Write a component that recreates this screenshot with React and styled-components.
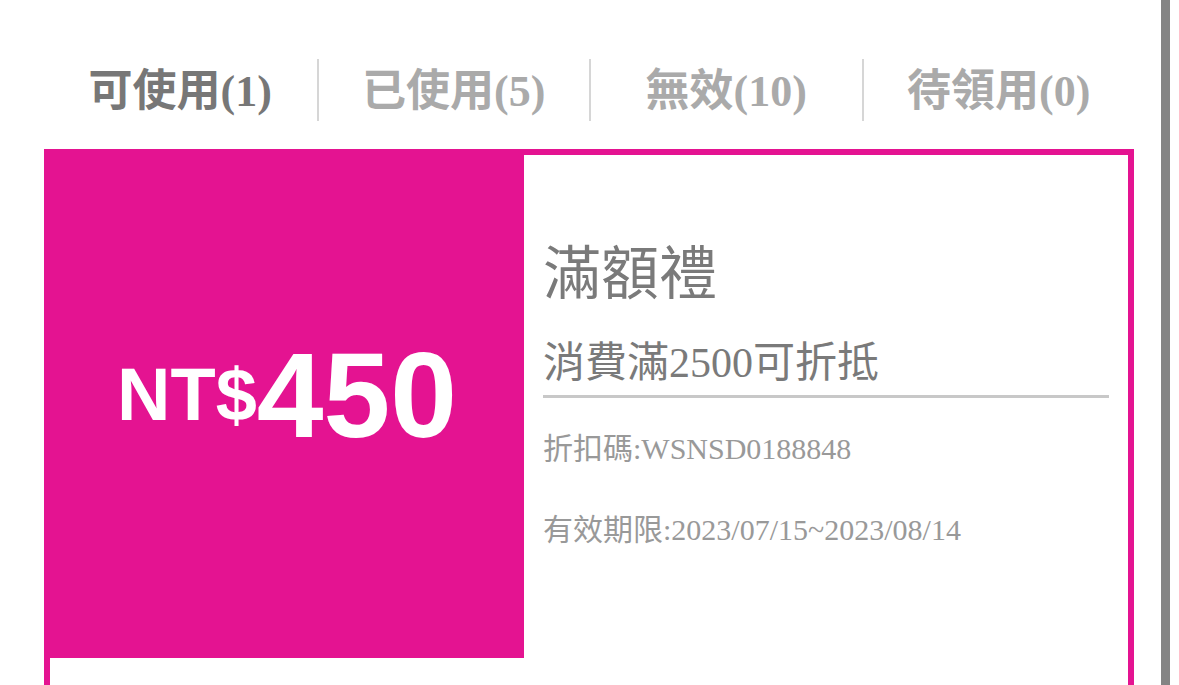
import React from 'react';
import styled, { createGlobalStyle } from 'styled-components';

const GlobalStyle = createGlobalStyle`
  html, body {
    margin: 0;
    padding: 0;
    height: 100%;
    overflow: hidden;
    background: #ffffff;
  }
  body {
    font-family: "Liberation Serif", "Noto Sans CJK TC", serif;
  }
`;

const MAGENTA = '#e41391';

// 頁面外框：左側內容 + 右側灰色捲軸條
const Page = styled.div`
  display: flex;
  height: 685px;
`;

const Main = styled.main`
  flex: 0 0 1161px;
  box-sizing: border-box;
  padding: 59px 27px 0 44px;
`;

const Rail = styled.div`
  flex: 0 0 9px;
  background: #848484;
`;

// 優惠券狀態分頁
const Tabs = styled.nav`
  display: grid;
  grid-template-columns: repeat(4, 1fr);
  height: 62px;
`;

const Tab = styled.div`
  display: flex;
  align-items: center;
  justify-content: center;
  padding-top: 3px;
  font-size: 44px;
  font-weight: 700;
  line-height: 1;
  color: ${(p) => (p.$active ? '#777777' : '#aaaaaa')};
  white-space: nowrap;

  & + & {
    border-left: 2px solid #d6d6d6;
  }
`;

// 優惠券卡片
const Card = styled.section`
  margin-top: 28px;
  border: 6px solid ${MAGENTA};
`;

const CardRow = styled.div`
  display: flex;
  height: 503px;
`;

const PricePanel = styled.div`
  flex: 0 0 474px;
  display: flex;
  align-items: center;
  justify-content: center;
  padding-bottom: 24px;
  box-sizing: border-box;
  background: ${MAGENTA};
  color: #ffffff;
  font-family: "Liberation Sans", Arial, sans-serif;
  font-weight: 700;
  line-height: 1;
`;

const Currency = styled.span`
  font-size: 74px;
`;

const Amount = styled.span`
  font-size: 120px;
`;

const Info = styled.div`
  flex: 1;
  display: flex;
  flex-direction: column;
  padding: 91px 19px 0;
  line-height: 1;
`;

const Title = styled.h2`
  margin: 0;
  font-size: 58px;
  font-weight: 400;
  color: #7a7a7a;
`;

const Subtitle = styled.p`
  margin: 38px 0 0;
  padding-bottom: 11px;
  border-bottom: 3px solid #c8c8c8;
  font-size: 42px;
  color: #7a7a7a;
`;

const Detail = styled.p`
  margin: ${(p) => p.$gap}px 0 0;
  font-size: 30px;
  color: #999999;
`;

const CardFooter = styled.div`
  min-height: 80px;
  background: #ffffff;
`;

const tabs = [
  { label: '可使用', count: 1, active: true },
  { label: '已使用', count: 5 },
  { label: '無效', count: 10 },
  { label: '待領用', count: 0 },
];

export default function App() {
  return (
    <>
      <GlobalStyle />
      <Page>
        <Main>
          <Tabs>
            {tabs.map((t) => (
              <Tab key={t.label} $active={t.active}>
                {t.label}({t.count})
              </Tab>
            ))}
          </Tabs>

          <Card>
            <CardRow>
              <PricePanel>
                <Currency>NT$</Currency>
                <Amount>450</Amount>
              </PricePanel>
              <Info>
                <Title>滿額禮</Title>
                <Subtitle>消費滿2500可折抵</Subtitle>
                <Detail $gap={36}>折扣碼:WSNSD0188848</Detail>
                <Detail $gap={51}>有效期限:2023/07/15~2023/08/14</Detail>
              </Info>
            </CardRow>
            <CardFooter />
          </Card>
        </Main>
        <Rail />
      </Page>
    </>
  );
}
